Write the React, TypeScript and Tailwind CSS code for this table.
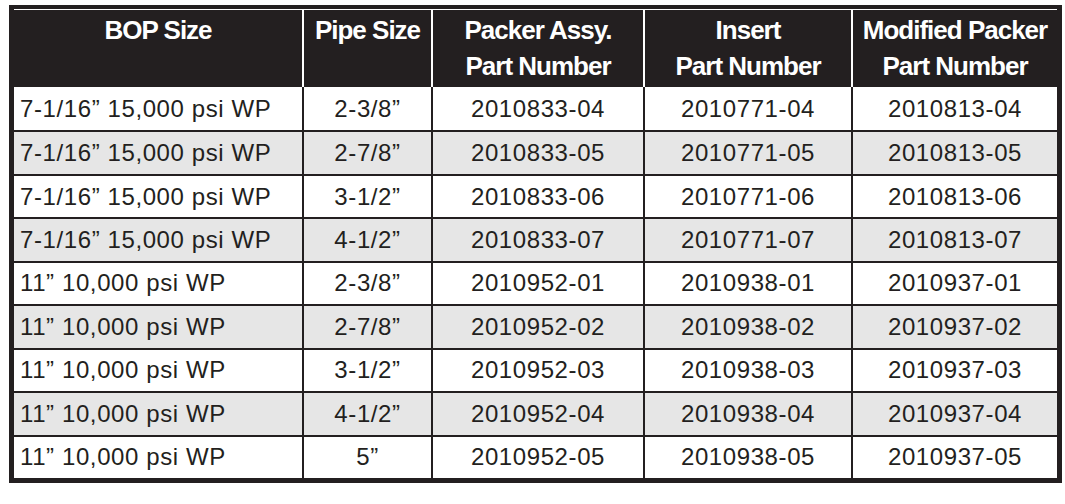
import React from 'react';

const rows = [
  ['7-1/16” 15,000 psi WP', '2-3/8”', '2010833-04', '2010771-04', '2010813-04'],
  ['7-1/16” 15,000 psi WP', '2-7/8”', '2010833-05', '2010771-05', '2010813-05'],
  ['7-1/16” 15,000 psi WP', '3-1/2”', '2010833-06', '2010771-06', '2010813-06'],
  ['7-1/16” 15,000 psi WP', '4-1/2”', '2010833-07', '2010771-07', '2010813-07'],
  ['11” 10,000 psi WP', '2-3/8”', '2010952-01', '2010938-01', '2010937-01'],
  ['11” 10,000 psi WP', '2-7/8”', '2010952-02', '2010938-02', '2010937-02'],
  ['11” 10,000 psi WP', '3-1/2”', '2010952-03', '2010938-03', '2010937-03'],
  ['11” 10,000 psi WP', '4-1/2”', '2010952-04', '2010938-04', '2010937-04'],
  ['11” 10,000 psi WP', '5”', '2010952-05', '2010938-05', '2010937-05'],
];

const headers = [
  ['BOP Size'],
  ['Pipe Size'],
  ['Packer Assy.', 'Part Number'],
  ['Insert', 'Part Number'],
  ['Modified Packer', 'Part Number'],
];

const cols = 'grid grid-cols-[288px_129px_212px_208px_206px]';

const App = () => {
  return (
    <div className="min-h-[504px] bg-white pt-[5px] pl-[9px]" style={{ fontFamily: '"Liberation Sans", Arial, sans-serif' }}>
      <div className="w-[1053px] border-[5px] border-t-4 border-[#231f20] bg-[#231f20]">
        {/* header */}
        <div className={`${cols} h-[78px] border-t border-white bg-[#231f20]`}>
          {headers.map((lines, i) => (
            <div
              key={i}
              className={`flex flex-col items-center pt-[2px] text-[26px] font-bold leading-[36px] tracking-[-1px] text-white ${i > 0 ? 'border-l-2 border-white' : ''}`}
            >
              {lines.map(l => (
                <span key={l}>{l}</span>
              ))}
            </div>
          ))}
        </div>

        {/* body */}
        <div className="grid h-[391px] grid-rows-9">
          {rows.map((r, ri) => (
            <div
              key={ri}
              className={`${cols} ${ri % 2 ? 'bg-[#e6e6e6]' : 'bg-white'} ${ri > 0 ? 'border-t-2 border-[#231f20]' : ''}`}
            >
              {r.map((c, ci) => (
                <div
                  key={ci}
                  className={`flex items-center text-[24px] tracking-[0.6px] text-[#231f20] ${ci === 0 ? 'justify-start pl-[6px]' : 'justify-center border-l-2 border-[#231f20]'}`}
                >
                  {c}
                </div>
              ))}
            </div>
          ))}
        </div>
      </div>
    </div>
  );
};

export default App;
